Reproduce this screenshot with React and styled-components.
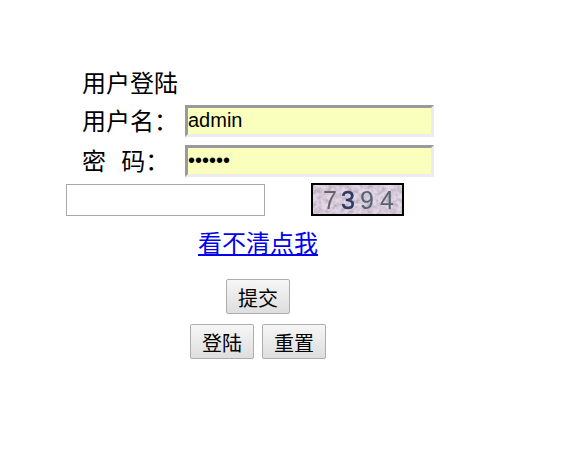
import React from "react"
import styled, { createGlobalStyle } from "styled-components"

const GlobalStyle = createGlobalStyle`
  html, body {
    margin: 0;
    padding: 0;
    background: #fff;
  }
  body {
    font-family: "Liberation Sans", "Noto Sans CJK SC", sans-serif;
    color: #000;
  }
`

function Captcha() {
  return (
    <CaptchaBox>
      <svg width="89" height="29" viewBox="1 1 89 29">
        <defs>
          <filter id="grain" x="0" y="0" width="100%" height="100%">
            <feTurbulence type="fractalNoise" baseFrequency="0.2" numOctaves="3" seed="11" />
            <feColorMatrix
              type="matrix"
              values="0 0 0 0 0.46  0 0 0 0 0.4  0 0 0 0 0.5  2 0 0 0 -0.7"
            />
          </filter>
          <filter id="soft">
            <feGaussianBlur stdDeviation="0.6" />
          </filter>
        </defs>
        <rect width="91" height="31" fill="#e4d7e6" />
        <rect width="91" height="31" filter="url(#grain)" />
        <g filter="url(#soft)" fontFamily="'Liberation Sans', sans-serif" fontSize="25">
          <text x="11" y="25" fill="#66646b">7</text>
          <text x="29" y="25" fill="#2b3b62" stroke="#2b3b62" strokeWidth="0.5">3</text>
          <text x="48" y="25" fill="#50646f">9</text>
          <text x="68" y="25" fill="#56646f">4</text>
        </g>
      </svg>
    </CaptchaBox>
  )
}

export default function App() {
  return (
    <Page>
      <GlobalStyle />
      <Title>用户登陆</Title>
      <Row>
        <Label>用户名：</Label>
        <FilledInput type="text" defaultValue="admin" />
      </Row>
      <Row>
        <Label>密&nbsp;&nbsp;码：</Label>
        <FilledInput type="password" defaultValue="123456" />
      </Row>
      <CaptchaRow>
        <CodeInput type="text" />
        <Captcha />
      </CaptchaRow>
      <Refresh href="#">看不清点我</Refresh>
      <SubmitRow>
        <Button type="button">提交</Button>
      </SubmitRow>
      <ActionRow>
        <Button type="button">登陆</Button>
        <Button type="button">重置</Button>
      </ActionRow>
    </Page>
  )
}

const Page = styled.div`
  width: 576px;
  height: 460px;
  box-sizing: border-box;
  padding: 68px 0 0 66px;
  overflow: hidden;
  font-size: 24px;
`

const Title = styled.div`
  height: 32px;
  line-height: 32px;
  margin-left: 16px;
`

const Row = styled.div`
  display: flex;
  align-items: center;
  height: 32px;
  margin: 5px 0 8px 16px;

  & + & {
    margin-top: 0;
    margin-bottom: 6px;
  }
`

const Label = styled.label`
  width: 103px;
  flex: none;
  padding-bottom: 3px;
  white-space: nowrap;
  word-spacing: 1px;
`

const FilledInput = styled.input`
  width: 249px;
  height: 32px;
  box-sizing: border-box;
  padding: 0 0 1px 0;
  background: #faffbd;
  border-style: solid;
  border-width: 3px;
  border-color: #9a9a9a #ececec #ececec #9a9a9a;
  border-radius: 0;
  outline: none;
  font-family: "Liberation Sans", sans-serif;
  font-size: 20px;
  color: #000;
`

const CaptchaRow = styled.div`
  display: flex;
  align-items: center;
  gap: 46px;
  height: 33px;
`

const CodeInput = styled.input`
  width: 199px;
  height: 32px;
  box-sizing: border-box;
  background: #fff;
  border: 1px solid #a9a9a9;
  border-radius: 0;
  outline: none;
  padding: 0 2px;
`

const CaptchaBox = styled.div`
  width: 93px;
  height: 33px;
  box-sizing: border-box;
  border: 2px solid #000;
  overflow: hidden;

  svg {
    display: block;
  }
`

const Refresh = styled.a`
  display: block;
  width: 120px;
  height: 32px;
  line-height: 30px;
  margin: 13px 0 0 132px;
  color: #0000ee;
  text-decoration: underline;
  white-space: nowrap;
`

const SubmitRow = styled.div`
  display: flex;
  margin: 18px 0 0 160px;
`

const ActionRow = styled.div`
  display: flex;
  gap: 8px;
  margin: 10px 0 0 124px;
`

const Button = styled.button`
  width: 64px;
  height: 35px;
  box-sizing: border-box;
  padding: 1px 0 0;
  border: 1px solid #adadad;
  border-radius: 2px;
  background: linear-gradient(#f6f6f6, #dedede);
  font-family: "Liberation Sans", "Noto Sans CJK SC", sans-serif;
  font-size: 20px;
  color: #000;
`
